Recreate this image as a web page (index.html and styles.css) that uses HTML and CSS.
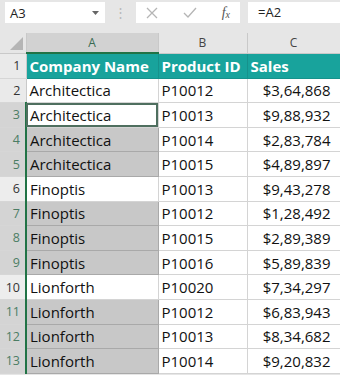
FILE: index.html
```html
<!DOCTYPE html>
<html lang="en">
<head>
  <meta charset="UTF-8">
  <title>Sheet</title>
  <link rel="stylesheet" href="styles.css">
</head>
<body>
  <div class="formula-bar">
    <div class="name-box">
      <span>A3</span>
      <svg class="caret" width="7" height="4" viewBox="0 0 7 4"><path d="M0 0h7L3.5 4z" fill="#666"/></svg>
    </div>
    <div class="grip">⋮</div>
    <div class="fx-buttons">
      <svg width="12" height="12" viewBox="0 0 12 12"><path d="M1 1l10 10M11 1L1 11" stroke="#b5b5b5" stroke-width="1.3" fill="none"/></svg>
      <svg width="14" height="12" viewBox="0 0 14 12"><path d="M1 6l4 4 8-9" stroke="#b5b5b5" stroke-width="1.3" fill="none"/></svg>
      <span class="fx">f<sub>x</sub></span>
    </div>
    <div class="formula-input">=A2</div>
  </div>

  <table class="sheet">
    <colgroup>
      <col class="c-head"><col class="c-a"><col class="c-b"><col class="c-c">
    </colgroup>
    <tr class="col-heads">
      <th class="corner"><span></span></th>
      <th class="sel">A</th><th>B</th><th>C</th>
    </tr>
    <tr class="title"><th>1</th><td>Company Name</td><td>Product ID</td><td>Sales</td></tr>
    <tr><th>2</th><td>Architectica</td><td>P10012</td><td class="num">$3,64,868</td></tr>
    <tr class="picked"><th>3</th><td class="active">Architectica</td><td>P10013</td><td class="num">$9,88,932</td></tr>
    <tr class="picked"><th>4</th><td class="grey">Architectica</td><td>P10014</td><td class="num">$2,83,784</td></tr>
    <tr class="picked"><th>5</th><td class="grey">Architectica</td><td>P10015</td><td class="num">$4,89,897</td></tr>
    <tr class="picked"><th class="plain">6</th><td>Finoptis</td><td>P10013</td><td class="num">$9,43,278</td></tr>
    <tr class="picked"><th>7</th><td class="grey">Finoptis</td><td>P10012</td><td class="num">$1,28,492</td></tr>
    <tr class="picked"><th>8</th><td class="grey">Finoptis</td><td>P10015</td><td class="num">$2,89,389</td></tr>
    <tr class="picked"><th>9</th><td class="grey">Finoptis</td><td>P10016</td><td class="num">$5,89,839</td></tr>
    <tr class="picked"><th class="plain">10</th><td>Lionforth</td><td>P10020</td><td class="num">$7,34,297</td></tr>
    <tr class="picked"><th>11</th><td class="grey">Lionforth</td><td>P10012</td><td class="num">$6,83,943</td></tr>
    <tr class="picked"><th>12</th><td class="grey">Lionforth</td><td>P10013</td><td class="num">$8,34,682</td></tr>
    <tr class="picked"><th>13</th><td class="grey">Lionforth</td><td>P10014</td><td class="num">$9,20,832</td></tr>
  </table>
</body>
</html>
```

FILE: styles.css
```css
html, body {
  margin: 0;
  padding: 0;
  background-color: #e6e6e6;
  overflow: hidden;
  font-family: "Open Sans", "Noto Sans", sans-serif;
}

.formula-bar {
  display: flex;
  align-items: stretch;
  height: 21px;
  padding: 2px 0 10px 5px;
}

.name-box {
  width: 100px;
  background: white;
  display: flex;
  align-items: center;
  justify-content: space-between;
  padding: 0 6px 0 5px;
  box-sizing: border-box;
  font-size: 13px;
  color: #222;
}

.caret {
  margin-top: 1px;
}

.grip {
  width: 31px;
  text-align: center;
  color: #b8b8b8;
  font-size: 13px;
  line-height: 21px;
}

.fx-buttons {
  width: 104px;
  background: white;
  display: flex;
  align-items: center;
  justify-content: space-between;
  padding: 0 10px 0 10px;
  box-sizing: border-box;
}

.fx {
  font-family: "Liberation Serif", serif;
  font-style: italic;
  font-size: 14px;
  color: #555;
}

.fx sub {
  font-size: 10px;
  vertical-align: -1px;
}

.formula-input {
  flex: 1;
  margin-left: 8px;
  background: white;
  font-size: 13px;
  color: #222;
  line-height: 21px;
  padding-left: 10px;
}

.sheet {
  border-collapse: collapse;
  table-layout: fixed;
  width: 340px;
  background: white;
}

.c-head { width: 26px; }
.c-a { width: 132px; }
.c-b { width: 89px; }
.c-c { width: 93px; }

tr th {
  padding: 0 5px 0 0;
  background: #eaeaea;
  color: #333;
  font-weight: normal;
  font-size: 12.5px;
  text-align: right;
  border-right: 1px solid #c9c9c9;
  border-bottom: 1px solid #d6d6d6;
}

.col-heads th {
  height: 19px;
  padding: 0;
  background: #e6e6e6;
  color: #444;
  font-size: 12px;
  text-align: center;
  border-right: 1px solid #c9c9c9;
  border-bottom: 1px solid #c9c9c9;
}

.col-heads th.sel {
  background: #d2d2d2;
  color: #3a6b52;
  border-bottom: 2px solid #217346;
}

.col-heads th.corner {
  position: relative;
}

.corner span {
  position: absolute;
  right: 3px;
  bottom: 3px;
  width: 0;
  height: 0;
  border-left: 13px solid transparent;
  border-bottom: 13px solid #b5b5b5;
}

.picked th {
  background: #d4d4d4;
  color: #4c7d64;
  border-right: 2px solid #217346;
}

.picked th.plain {
  background: #ededed;
  color: #333;
}

td {
  height: 23.6px;
  padding: 0 3px;
  font-size: 15px;
  color: #111;
  border: 1px solid #d4d4d4;
  white-space: nowrap;
  overflow: hidden;
}

.title td {
  background: #18a39c;
  color: white;
  font-weight: bold;
  border-color: #16928c;
}

td.num {
  text-align: right;
  padding-right: 9px;
}

td.grey {
  background: #c8c8c8;
  border-color: #a9a9a9;
}

td.active {
  outline: 2px solid #4f6f5f;
  outline-offset: -2px;
}
```
